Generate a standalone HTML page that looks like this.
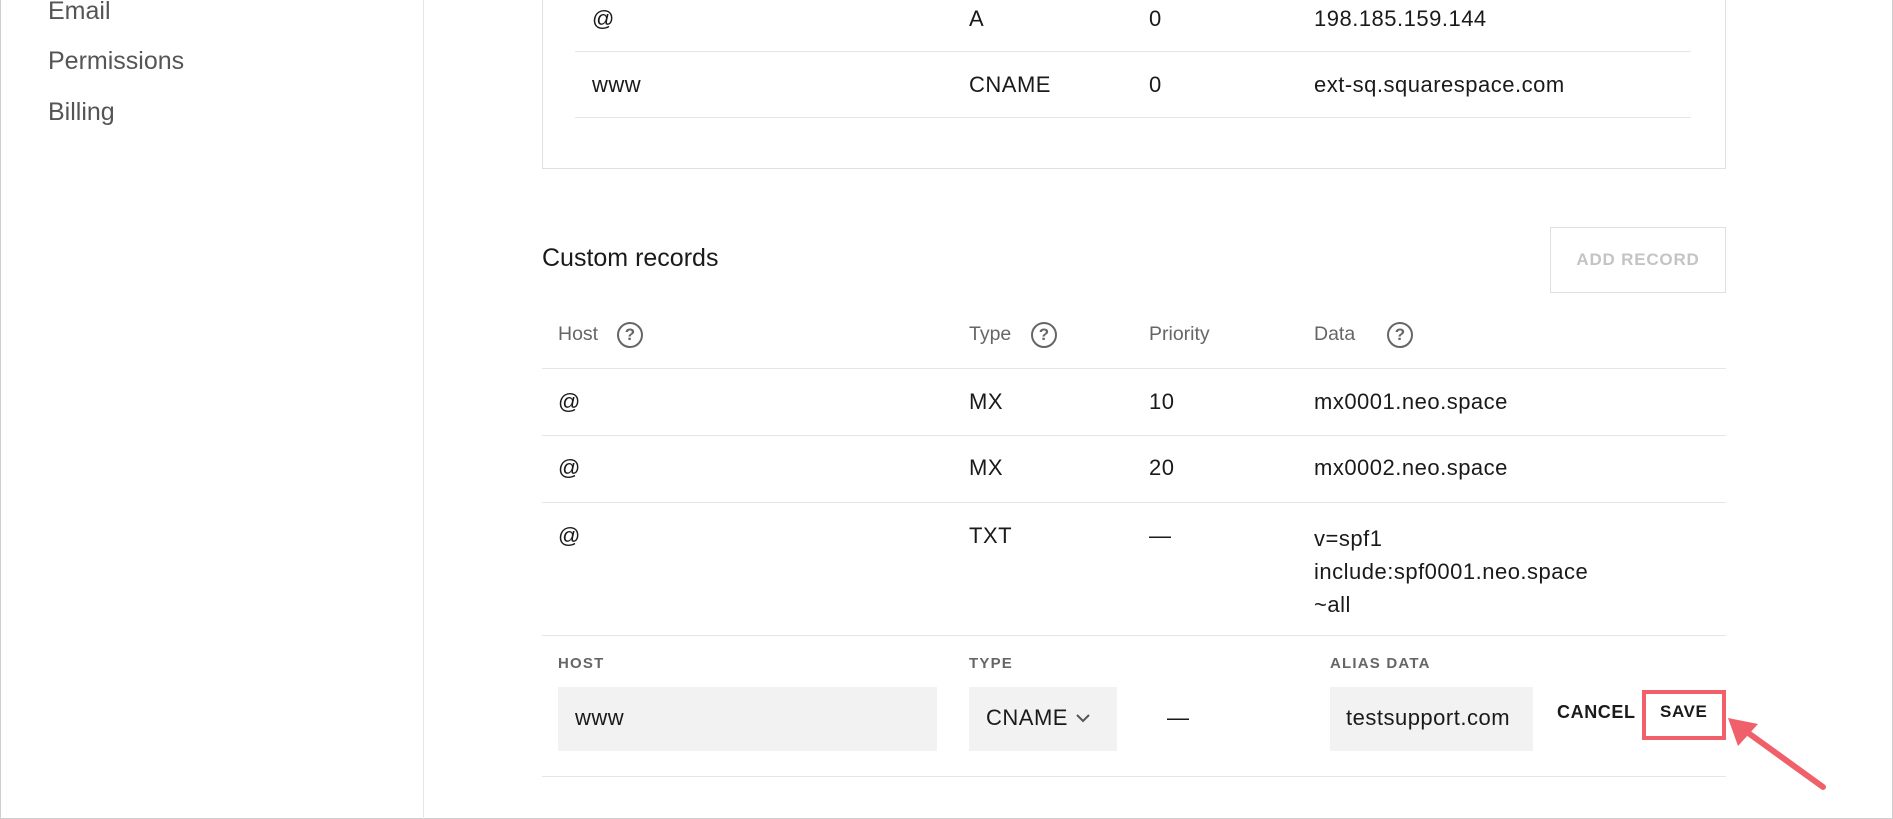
<!DOCTYPE html>
<html><head><style>
*{margin:0;padding:0;box-sizing:border-box}
body{width:1893px;height:819px;overflow:hidden;background:#fff;font-family:"Liberation Sans",Arial,sans-serif;color:#1a1a1a;position:relative}
.frame{position:absolute;left:0;top:0;width:1893px;height:819px;border:1px solid #cfcfcf;border-top:none}
.a{position:absolute;white-space:nowrap}
.side{left:48px;font-size:25px;color:#555}
.t{font-size:22px;letter-spacing:.5px;color:#1a1a1a}
.h{font-size:19.5px;color:#666}
.hl{position:absolute;height:1px;background:#e6e6e6}
.q{position:absolute;width:26px;height:26px;border:2.5px solid #666;border-radius:50%;font-size:17px;font-weight:bold;color:#666;text-align:center;line-height:21px}
.lab{font-size:15px;font-weight:bold;color:#666;letter-spacing:1.2px}
.inp{position:absolute;background:#f2f2f2}
</style></head><body>
<div class="frame"></div>
<div class="a side" style="top:-3px">Email</div>
<div class="a side" style="top:47px">Permissions</div>
<div class="a side" style="top:98px">Billing</div>
<div style="position:absolute;left:423px;top:0;width:1px;height:819px;background:#e6e6e6"></div>

<div style="position:absolute;left:542px;top:-2px;width:1184px;height:171px;border:1px solid #e0e0e0"></div>
<div class="a t" style="left:592px;top:6px">@</div>
<div class="a t" style="left:969px;top:6px">A</div>
<div class="a t" style="left:1149px;top:6px">0</div>
<div class="a t" style="left:1314px;top:6px">198.185.159.144</div>
<div class="hl" style="left:575px;top:51px;width:1116px"></div>
<div class="a t" style="left:592px;top:72px">www</div>
<div class="a t" style="left:969px;top:72px">CNAME</div>
<div class="a t" style="left:1149px;top:72px">0</div>
<div class="a t" style="left:1314px;top:72px">ext-sq.squarespace.com</div>
<div class="hl" style="left:575px;top:117px;width:1116px"></div>

<div class="a" style="left:542px;top:244px;font-size:25px">Custom records</div>
<div style="position:absolute;left:1550px;top:227px;width:176px;height:66px;border:1px solid #e0e0e0;font-size:17px;font-weight:bold;color:#c4c4c4;text-align:center;line-height:64px;letter-spacing:.8px">ADD RECORD</div>

<div class="a h" style="left:558px;top:323px">Host</div><div class="q" style="left:617px;top:322px">?</div>
<div class="a h" style="left:969px;top:323px">Type</div><div class="q" style="left:1031px;top:322px">?</div>
<div class="a h" style="left:1149px;top:323px">Priority</div>
<div class="a h" style="left:1314px;top:323px">Data</div><div class="q" style="left:1387px;top:322px">?</div>
<div class="hl" style="left:542px;top:368px;width:1184px"></div>

<div class="a t" style="left:558px;top:389px">@</div><div class="a t" style="left:969px;top:389px">MX</div><div class="a t" style="left:1149px;top:389px">10</div><div class="a t" style="left:1314px;top:389px">mx0001.neo.space</div>
<div class="hl" style="left:542px;top:435px;width:1184px"></div>
<div class="a t" style="left:558px;top:455px">@</div><div class="a t" style="left:969px;top:455px">MX</div><div class="a t" style="left:1149px;top:455px">20</div><div class="a t" style="left:1314px;top:455px">mx0002.neo.space</div>
<div class="hl" style="left:542px;top:502px;width:1184px"></div>
<div class="a t" style="left:558px;top:523px">@</div><div class="a t" style="left:969px;top:523px">TXT</div><div class="a t" style="left:1149px;top:523px">—</div>
<div class="a t" style="left:1314px;top:522px;line-height:33px">v=spf1<br>include:spf0001.neo.space<br>~all</div>
<div class="hl" style="left:542px;top:635px;width:1184px"></div>

<div class="a lab" style="left:558px;top:655px">HOST</div>
<div class="a lab" style="left:969px;top:655px">TYPE</div>
<div class="a lab" style="left:1330px;top:655px">ALIAS DATA</div>
<div class="inp" style="left:558px;top:687px;width:379px;height:64px"></div>
<div class="a t" style="left:575px;top:705px">www</div>
<div class="inp" style="left:969px;top:687px;width:148px;height:64px"></div>
<div class="a t" style="left:986px;top:705px">CNAME</div>
<svg class="a" style="left:1075px;top:712px" width="16" height="12"><path d="M2 3 L8 9 L14 3" stroke="#555" stroke-width="2" fill="none"/></svg>
<div class="a t" style="left:1167px;top:705px">—</div>
<div class="inp" style="left:1330px;top:687px;width:203px;height:64px"></div>
<div class="a t" style="left:1346px;top:705px">testsupport.com</div>
<div class="a" style="left:1557px;top:702px;font-size:18px;font-weight:bold;letter-spacing:.6px">CANCEL</div>
<div style="position:absolute;left:1642px;top:690px;width:84px;height:50px;border:4px solid #f0606a"></div>
<div class="a" style="left:1660px;top:702px;font-size:17px;font-weight:bold;letter-spacing:.6px">SAVE</div>
<div class="hl" style="left:542px;top:776px;width:1184px"></div>
<svg class="a" style="left:1720px;top:710px" width="120" height="90"><path d="M103 77 L20 17" stroke="#f0606a" stroke-width="6" stroke-linecap="round"/><path d="M8 8 L38 14 L18 36 Z" fill="#f0606a"/></svg>
</body></html>
